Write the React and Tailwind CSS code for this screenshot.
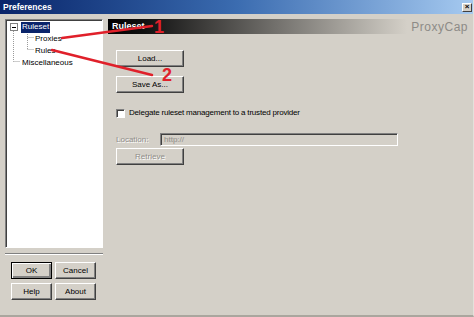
import React from 'react'

const Btn = ({ label, def, disabled, wide }) => (
  <div
    className={`${wide ? 'w-[68px] h-[17px]' : 'w-[41px] h-[17px]'} ${
      def
        ? 'border border-black shadow-[inset_1px_1px_0_#ffffff,inset_-2px_-2px_0_#808080]'
        : 'border border-t-white border-l-white border-r-[#404040] border-b-[#404040] shadow-[inset_-1px_-1px_0_#808080]'
    } bg-[#d4d0c8] flex items-center justify-center text-[8px] leading-none ${
      disabled ? 'text-[#8f8d88] [text-shadow:1px_1px_0_#ffffff]' : 'text-black'
    }`}
  >
    {label}
  </div>
)

const App = () => {
  return (
    <div className="w-[474px] h-[317px] bg-[#d4d0c8] relative overflow-hidden flex flex-col font-['Liberation_Sans',Arial,sans-serif] border-r border-r-[#e4e1db] border-b-2 border-b-[#aaa69e]">
      {/* Title bar */}
      <div className="h-[14px] bg-gradient-to-r from-[#0a246a] via-[#3b6cb0] to-[#a6caf0] flex items-center justify-between pl-[3px] pr-[1px]">
        <span className="text-white font-bold text-[8.5px] leading-none">Preferences</span>
        <div className="w-[10px] h-[9px] bg-[#d4d0c8] border border-t-white border-l-white border-r-[#404040] border-b-[#404040] flex items-center justify-center text-[8px] leading-none font-bold text-black">
          ×
        </div>
      </div>

      <div className="flex flex-1 pt-[5px]">
        {/* Left column */}
        <div className="ml-[5px] w-[98px] flex flex-col">
          <div className="relative h-[229px] bg-white border border-t-[#808080] border-l-[#808080] border-r-white border-b-white shadow-[inset_1px_1px_0_#404040] pt-[1px] text-[8px] leading-none text-black">
            <svg className="absolute left-0 top-0" width="96" height="60" viewBox="0 0 96 60">
              <g stroke="#9a9a9a" strokeWidth="1" strokeDasharray="1 1" fill="none">
                <line x1="7.5" y1="11" x2="7.5" y2="41.5" />
                <line x1="7.5" y1="41.5" x2="14" y2="41.5" />
                <line x1="21.5" y1="12" x2="21.5" y2="29.5" />
                <line x1="21.5" y1="17.5" x2="28" y2="17.5" />
                <line x1="21.5" y1="29.5" x2="28" y2="29.5" />
              </g>
            </svg>
            <div className="h-[12px] flex items-center pl-[4px] relative">
              <div className="w-[8px] h-[8px] border border-[#808080] bg-white flex items-center justify-center">
                <div className="w-[4px] h-[1px] bg-black" />
              </div>
              <span className="ml-[3px] bg-[#0a246a] text-white px-[1px] h-[11px] flex items-center">Ruleset</span>
            </div>
            <div className="h-[12px] flex items-center pl-[29px] relative">Proxies</div>
            <div className="h-[12px] flex items-center pl-[29px] relative">Rules</div>
            <div className="h-[12px] flex items-center pl-[16px] relative">Miscellaneous</div>
          </div>

          <div className="mt-[5px] h-[2px] border-t border-t-[#808080] border-b border-b-white" />

          <div className="mt-[7px] pl-[6px] grid grid-cols-[41px_41px] gap-x-[3px] gap-y-[4px]">
            <Btn label="OK" def />
            <Btn label="Cancel" />
            <Btn label="Help" />
            <Btn label="About" />
          </div>
        </div>

        {/* Right column */}
        <div className="ml-[5px] flex-1 flex flex-col">
          <div className="h-[15px] bg-[linear-gradient(to_right,#000000_0%,#111111_10%,#d4d0c8_82%)] flex items-center justify-between pl-[4px] pr-[5px]">
            <span className="text-white font-bold text-[9px] leading-none">Ruleset</span>
            <span className="text-[#8d8b87] text-[12px] tracking-[0.5px] leading-none">ProxyCap</span>
          </div>

          <div className="pl-[8px] flex flex-col">
            <div className="mt-[16px]">
              <Btn label="Load..." wide />
            </div>
            <div className="mt-[9px]">
              <Btn label="Save As..." wide />
            </div>

            <div className="mt-[15px] flex items-center h-[10px]">
              <div className="w-[9px] h-[9px] bg-white border border-t-[#808080] border-l-[#808080] border-r-white border-b-white shadow-[inset_1px_1px_0_#404040]" />
              <span className="ml-[4px] text-[8px] leading-none text-black tracking-[-0.2px]">
                Delegate ruleset management to a trusted provider
              </span>
            </div>

            <div className="mt-[15px] flex items-center">
              <span className="w-[44px] text-[8px] leading-none text-[#8f8d88] [text-shadow:1px_1px_0_#ffffff]">Location:</span>
              <div className="w-[238px] h-[13px] bg-[#d4d0c8] border border-t-[#808080] border-l-[#808080] border-r-white border-b-white shadow-[inset_1px_1px_0_#404040] flex items-center pl-[3px] text-[8px] leading-none text-[#8f8d88]">
                http://
              </div>
            </div>

            <div className="mt-[2px]">
              <Btn label="Retrieve" wide disabled />
            </div>
          </div>
        </div>
      </div>

      {/* Red annotations */}
      <svg className="absolute left-0 top-0 pointer-events-none" width="474" height="317" viewBox="0 0 474 317">
        <g stroke="#e0202a" strokeWidth="2.5" strokeLinecap="round">
          <line x1="62" y1="38" x2="152" y2="26" />
          <line x1="52" y1="50" x2="152" y2="75" />
        </g>
      </svg>
      <span className="absolute left-[154px] top-[18px] text-[#e0202a] font-bold text-[18px] leading-none">1</span>
      <span className="absolute left-[162px] top-[66px] text-[#e0202a] font-bold text-[18px] leading-none">2</span>
    </div>
  )
}

export default App
